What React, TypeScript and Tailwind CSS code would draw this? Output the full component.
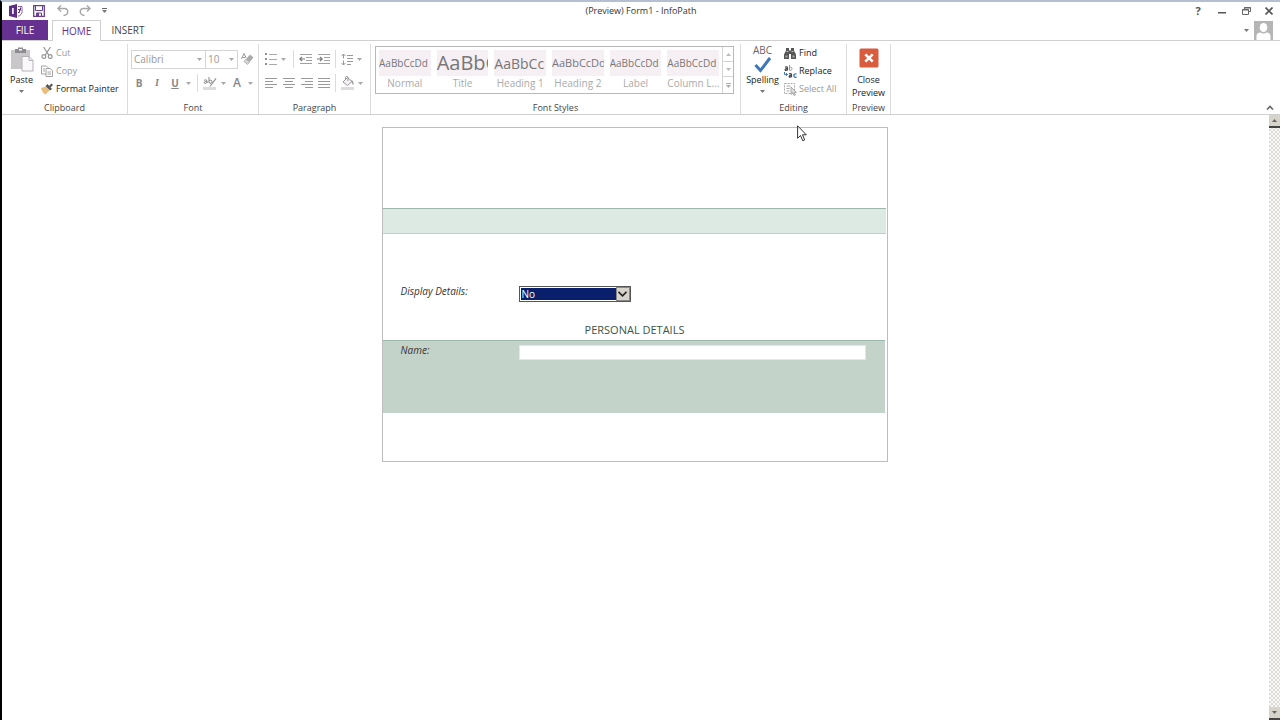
import React from "react";

type IconProps = { className?: string };

function Caret({ className = "text-[#777]" }: IconProps) {
  return (
    <svg className={`shrink-0 ${className}`} width="5" height="3" viewBox="0 0 5 3" fill="currentColor" aria-hidden="true">
      <path d="M0 0h5L2.5 3z" />
    </svg>
  );
}

function InfoPathIcon() {
  return (
    <svg width="14" height="14" viewBox="0 0 14 14" aria-hidden="true">
      <path d="M0 2l8-2v14l-8-2z" fill="#5f2d86" />
      <path d="M3.9 4v6" stroke="#fff" strokeWidth="1.6" />
      <path d="M9 2.5h4v6.5l-2.500 3H9" fill="none" stroke="#8a68a8" strokeWidth="1" />
      <path d="M9 5.500h1.500v3H9M11.500 3.500v3" fill="none" stroke="#5f2d86" strokeWidth="1" />
    </svg>
  );
}

function SaveIcon() {
  return (
    <svg width="12" height="12" viewBox="0 0 12 12" fill="none" stroke="#6a3f92" aria-hidden="true">
      <path d="M.7.7h10.600v10.600H.7z" strokeWidth="1.300" />
      <path d="M2.500 1v4.500h7V1" strokeWidth="1" />
      <path d="M3.500 11V8h5v3" strokeWidth="1" />
      <path d="M4 8h2v3H4z" fill="#6a3f92" stroke="none" />
    </svg>
  );
}

function UndoIcon({ className = "" }: IconProps) {
  return (
    <svg className={className} width="12" height="12" viewBox="0 0 12 12" fill="none" stroke="#a6a6a6" strokeWidth="1.400" aria-hidden="true">
      <path d="M4 .500L1 3.500l3 3" />
      <path d="M1 3.500h6.500C12 3.500 12 10 6.500 10.500" />
    </svg>
  );
}

function PasteIcon() {
  return (
    <svg width="24" height="26" viewBox="0 0 24 26" aria-hidden="true">
      <path d="M1 4h19v19H1z" fill="#c9c7ca" />
      <path d="M5 3h3V1.500h5V3h3v4H5z" fill="#8f8d91" />
      <path d="M9 3h3v1.500H9z" fill="#fff" />
      <path d="M12 10.500h7l4 4V25H12z" fill="#fbf8fc" stroke="#b4b0b7" />
      <path d="M19 10.500v4h4" fill="none" stroke="#b4b0b7" />
    </svg>
  );
}

function CutIcon() {
  return (
    <svg width="12" height="12" viewBox="0 0 12 12" fill="none" stroke="#969696" strokeWidth="1.200" aria-hidden="true">
      <path d="M2.500 0l5.500 8.500M9.500 0L4 8.500" />
      <circle cx="2.800" cy="9.500" r="1.900" />
      <circle cx="9.200" cy="9.500" r="1.900" />
    </svg>
  );
}

function CopyIcon() {
  return (
    <svg width="12" height="12" viewBox="0 0 12 12" fill="#fff" stroke="#a3a3a3" aria-hidden="true">
      <path d="M.5 1h5l1.500 1.500V9H.5z" />
      <path d="M2 4h2M2 6h2" />
      <path d="M5 3.500h4l2.500 2V11.500H5z" />
      <path d="M6.500 7h3.500M6.500 9h3.500" />
    </svg>
  );
}

function PainterIcon() {
  return (
    <svg width="12" height="12" viewBox="0 0 12 12" aria-hidden="true">
      <path d="M0 5l5-1.500 3.500 4L4.500 11.500C2 10.500 1 8 0 5z" fill="#e9bd7c" />
      <path d="M4.500 3l2-2L11 6 9 7.500z" fill="#555" />
      <path d="M8 3l2.500-2.500L12 2 9.500 4.500z" fill="#555" />
    </svg>
  );
}

function EraserIcon() {
  return (
    <svg width="13" height="12" viewBox="0 0 13 12" aria-hidden="true">
      <path d="M.5 6L3 .500 5 4.500M1.500 4.500h3" fill="none" stroke="#999" strokeWidth="1" />
      <path d="M3 8.500L9 1.500 12.500 4.500 6.500 11.500z" fill="#aaa" />
      <path d="M3 8.500L5 6l3.500 3-2 2.500z" fill="#d5d5d5" stroke="#aaa" strokeWidth=".6" />
    </svg>
  );
}

function HighlightIcon() {
  return (
    <svg width="14" height="14" viewBox="0 0 14 14" aria-hidden="true">
      <path d="M1 4.500c1-1 3-.8 3 .5V7M4 5.500C1 5.200.500 7.200 2 7.400 3.200 7.500 4 6.500 4 6M6 1v6M6 5c1-1.500 3-1 3 .7S7 8 6 6.500" fill="none" stroke="#888" strokeWidth="1" />
      <path d="M12.500 2L7 9.500l-1 1.500 2-1L13.500 3z" fill="#999" />
      <path d="M0 11h13v3H0z" fill="#dcdcdc" />
    </svg>
  );
}

function BulletsIcon() {
  return (
    <svg width="12" height="12" viewBox="0 0 12 12" fill="#8f8f8f" aria-hidden="true">
      <path d="M0 0h2v2H0zM0 5h2v2H0zM0 10h2v2H0z" />
      <path d="M4 1h8v1H4zM4 6h8v1H4zM4 11h8v1H4z" fill="#aaa" />
    </svg>
  );
}

function IndentIcon({ direction }: { direction: "in" | "out" }) {
  return (
    <svg width="13" height="10" viewBox="0 0 13 10" fill="none" stroke="#a0a0a0" aria-hidden="true">
      <path d="M1 .5h12M7 3.500h6M7 6.500h6M1 9.500h12" />
      <path d={direction === "out" ? "M6 5H.800M3 2.800L.800 5 3 7.200" : "M0 5h5.200M3 2.800L5.200 5 3 7.200"} stroke="#777" strokeWidth="1.200" />
    </svg>
  );
}

function LineSpacingIcon() {
  return (
    <svg width="12" height="13" viewBox="0 0 12 13" fill="none" stroke="#999" aria-hidden="true">
      <path d="M2.500 1v4.500M.5 3l2-2 2 2M2.500 7.500V12M.5 10l2 2 2-2M6 2.500h6M6 5.500h6M6 8.500h6M6 11.500h4" />
    </svg>
  );
}

const alignPaths = {
  left: "M0 .5h12M0 3.500h8M0 6.500h12M0 9.500h8",
  center: "M0 .5h12M2 3.500h8M0 6.500h12M2 9.500h8",
  right: "M0 .5h12M4 3.500h8M0 6.500h12M4 9.500h8",
  justify: "M0 .5h12M0 3.500h12M0 6.500h12M0 9.500h12",
};

function AlignIcon({ kind }: { kind: keyof typeof alignPaths }) {
  return (
    <svg width="12" height="10" viewBox="0 0 12 10" fill="none" stroke="#999" aria-hidden="true">
      <path d={alignPaths[kind]} />
    </svg>
  );
}

function BucketIcon() {
  return (
    <svg width="14" height="14" viewBox="0 0 14 14" aria-hidden="true">
      <path d="M2 6l4.500-4.500L11 5.500 6.500 9.500z" fill="#f4f0f4" stroke="#999" />
      <path d="M4.500 4V1.500c0-1.500 2.500-1.500 2.500 0V5" fill="none" stroke="#999" />
      <path d="M10 4c2 .5 3 2 2.500 5-1-.5-1.500-1.500-1.500-3z" fill="#999" />
      <path d="M0 11h13v3H0z" fill="#dcdcdc" />
    </svg>
  );
}

function CheckIcon() {
  return (
    <svg width="18" height="17" viewBox="0 0 18 17" aria-hidden="true">
      <path d="M1.500 9l5 5.500L16 2" fill="none" stroke="#3f76b8" strokeWidth="3" />
    </svg>
  );
}

function FindIcon() {
  return (
    <svg width="12" height="11" viewBox="0 0 12 11" fill="#555" aria-hidden="true">
      <path d="M2 0h3v2.500h2V0h3v2.500l2 4V11H7V6H5v5H0V6.500l2-4z" />
      <path d="M1.500 7.500h2v2h-2zM8.500 7.500h2v2h-2z" fill="#aaa" />
      <path d="M2.500 3.500h2M7.500 3.500h2" stroke="#ddd" strokeWidth=".8" />
    </svg>
  );
}

function ReplaceIcon() {
  return (
    <svg className="shrink-0" width="13" height="13" viewBox="0 0 13 13" fill="none" aria-hidden="true">
      <path d="M1 2.300c1-.8 2.500-.5 2.500.7v2.500M3.500 3.700C.700 3.400.700 5.500 2 5.500c1 0 1.500-.7 1.500-1.200" stroke="#444" strokeWidth="1.200" />
      <path d="M5.500 0v5.500M5.500 3c.8-1.300 2.500-.9 2.500.7S6.300 6 5.500 4.700" stroke="#999" />
      <path d="M5 9c1-.8 2.500-.5 2.500.7v2.500M7.500 10.400c-2.800-.3-2.800 1.800-1.500 1.800 1 0 1.500-.7 1.500-1.200" stroke="#444" strokeWidth="1.200" />
      <path d="M12.500 9.200c-1.200-.9-2.700 0-2.700 1.400s1.500 2.200 2.700 1.300" stroke="#3f76b8" strokeWidth="1.300" />
      <path d="M.5 7v2.500h3M2 8l1.500 1.500L2 11" stroke="#3f76b8" />
    </svg>
  );
}

function SelectAllIcon() {
  return (
    <svg className="shrink-0" width="13" height="13" viewBox="0 0 13 13" fill="none" stroke="#aaa" aria-hidden="true">
      <path d="M.5.500h10v10H.5z" strokeDasharray="2 1" />
      <path d="M2.500 3h4M2.500 5.500h3M2.500 8h3" />
      <path d="M7 4v7.500l1.800-1.700L10 12.500l1.500-.6-1.200-2.500H12.500z" fill="#ddd" stroke="#999" strokeWidth=".8" />
    </svg>
  );
}

function ClosePreviewIcon() {
  return (
    <svg width="20" height="20" viewBox="0 0 20 20" aria-hidden="true">
      <rect x=".5" y=".5" width="19" height="19" rx="1.500" fill="#d95c3f" />
      <path d="M6.300 6.300l7.400 7.400M13.700 6.300l-7.400 7.400" stroke="#fff" strokeWidth="2.600" />
    </svg>
  );
}

function Group({ title, className = "", bodyClassName = "", children }: { title: string; className?: string; bodyClassName?: string; children: React.ReactNode }) {
  return (
    <section aria-label={title} className={`flex shrink-0 flex-col border-r border-[#dcdcdc] ${className}`}>
      <div className={`h-[58px] ${bodyClassName}`}>{children}</div>
      <h2 className="text-center leading-3 text-[#444]">{title}</h2>
    </section>
  );
}

function Row({ icon, label, disabled = false }: { icon: React.ReactNode; label: string; disabled?: boolean }) {
  return (
    <button type="button" disabled={disabled} className="flex h-[18px] items-center gap-[3px] whitespace-nowrap text-[#222] disabled:text-[#999]">
      <span className="flex w-3 shrink-0 justify-center">{icon}</span>
      {label}
    </button>
  );
}

function Tool({ label, className, children }: { label: string; className: string; children: React.ReactNode }) {
  return (
    <button type="button" disabled aria-label={label} className={`flex h-5 shrink-0 items-center justify-center ${className}`}>
      {children}
    </button>
  );
}

function Rule() {
  return <span className="h-[18px] w-px shrink-0 bg-[#dcdcdc]" />;
}

function ComboBox({ label, value, className }: { label: string; value: string; className: string }) {
  return (
    <div className={`relative h-[19px] ${className}`}>
      <select disabled aria-label={label} className="h-full w-full appearance-none border border-[#d4d4d4] bg-white px-[2px] text-[10px] text-[#999] opacity-100">
        <option>{value}</option>
      </select>
      <Caret className="pointer-events-none absolute top-2 right-1 text-[#aaa]" />
    </div>
  );
}

const fontStyles = [
  { name: "Normal", sample: "AaBbCcDd", size: "text-[10px]" },
  { name: "Title", sample: "AaBbC", size: "text-[20px]" },
  { name: "Heading 1", sample: "AaBbCc", size: "text-[14px]" },
  { name: "Heading 2", sample: "AaBbCcDd", size: "text-[11px]" },
  { name: "Label", sample: "AaBbCcDd", size: "text-[10px]" },
  { name: "Column L...", sample: "AaBbCcDd", size: "text-[10px]" },
];

function TitleBar() {
  return (
    <header className="flex h-[18px] items-center pl-[7px]">
      <div className="flex flex-1 items-center pb-px">
        <InfoPathIcon />
        <button type="button" aria-label="Save" className="ml-[10px]"><SaveIcon /></button>
        <button type="button" disabled aria-label="Undo" className="ml-3"><UndoIcon /></button>
        <button type="button" disabled aria-label="Redo" className="ml-[10px]"><UndoIcon className="-scale-x-100" /></button>
        <button type="button" aria-label="Customize toolbar" className="ml-[11px] flex flex-col items-center gap-px">
          <span className="h-px w-[5px] bg-[#666]" />
          <Caret />
        </button>
      </div>
      <h1 className="text-[#333]">(Preview) Form1 - InfoPath</h1>
      <div className="flex flex-1 items-center justify-end pl-[7px] text-[#555]">
        <button type="button" aria-label="Help" className="w-6 text-[11px] font-bold">?</button>
        <button type="button" aria-label="Minimize" className="flex w-6 justify-center">
          <svg width="8" height="8" viewBox="0 0 8 8"><path d="M0 5h8v1.500H0z" fill="#555" /></svg>
        </button>
        <button type="button" aria-label="Restore" className="flex w-6 justify-center">
          <svg width="9" height="8" viewBox="0 0 9 8" fill="none" stroke="#666"><path d="M2.500 2.500v-2h6v4H7M.5 2.500h6v5h-6z" /><path d="M2 1h7M0 3h7" /></svg>
        </button>
        <button type="button" aria-label="Close" className="flex w-[22px] justify-center">
          <svg width="8" height="8" viewBox="0 0 8 8" fill="none" stroke="#555" strokeWidth="1.600"><path d="M.5.500l7 7M7.500.500l-7 7" /></svg>
        </button>
      </div>
    </header>
  );
}

function TabBar() {
  return (
    <nav className="flex h-[21px] items-end border-b border-[#d0d0d0] text-[10px]">
      <button type="button" className="h-5 w-[46px] bg-[#65308f] text-white">FILE</button>
      <button type="button" className="-mb-px ml-1 h-[21px] w-[49px] border border-b-0 border-[#d0d0d0] bg-white text-[#65308f]">HOME</button>
      <button type="button" className="h-5 w-[54px] text-[#444]">INSERT</button>
      <button type="button" aria-label="Account" className="mr-[7px] ml-auto flex items-center gap-[5px]">
        <Caret />
        <svg width="19" height="19" viewBox="0 0 19 19" aria-hidden="true">
          <path d="M0 0h19v19H0z" fill="#b5b5b5" />
          <ellipse cx="9.500" cy="6.500" rx="3.800" ry="4.500" fill="#fff" />
          <path d="M2.500 19v-4c0-2 1.500-3.500 4-3.500 1.500 1.300 4.500 1.300 6 0 2.500 0 4 1.500 4 3.500v4z" fill="#fff" />
        </svg>
      </button>
    </nav>
  );
}

function Ribbon() {
  return (
    <div className="flex border-b border-[#d0d0d0] pt-[3px]">
      <Group title="Clipboard" className="w-[126px]">
        <div className="flex">
          <button type="button" className="flex w-[39px] flex-col items-center pt-[2px] text-[#222]">
            <PasteIcon />
            <span className="mt-[2px] leading-3">Paste</span>
            <Caret className="mt-1 text-[#777]" />
          </button>
          <div>
            <Row icon={<CutIcon />} label="Cut" disabled />
            <Row icon={<CopyIcon />} label="Copy" disabled />
            <Row icon={<PainterIcon />} label="Format Painter" />
          </div>
        </div>
      </Group>

      <Group title="Font" className="w-[131px]" bodyClassName="pl-[3px]">
        <div className="flex items-center pt-[5px]">
          <ComboBox label="Font name" value="Calibri" className="w-[75px]" />
          <ComboBox label="Font size" value="10" className="-ml-px w-[33px]" />
          <Tool label="Clear formatting" className="ml-[2px] w-[14px]"><EraserIcon /></Tool>
        </div>
        <div className="flex items-center pt-1 text-[10px] text-[#888]">
          <Tool label="Bold" className="w-4 font-bold">B</Tool>
          <Tool label="Italic" className="w-5 font-serif font-bold italic">I</Tool>
          <Tool label="Underline" className="w-4 font-bold underline">U</Tool>
          <Tool label="Underline options" className="mr-1 w-[10px]"><Caret className="text-[#aaa]" /></Tool>
          <Rule />
          <Tool label="Highlight" className="ml-[5px] w-[14px]"><HighlightIcon /></Tool>
          <Tool label="Highlight options" className="w-3"><Caret className="text-[#aaa]" /></Tool>
          <Tool label="Font color" className="w-4 text-[12px] font-semibold">A</Tool>
          <Tool label="Font color options" className="w-[10px]"><Caret className="text-[#aaa]" /></Tool>
        </div>
      </Group>

      <Group title="Paragraph" className="w-[112px]" bodyClassName="pl-[6px]">
        <div className="flex items-center pt-[5px]">
          <Tool label="Bullets" className="w-3"><BulletsIcon /></Tool>
          <Tool label="Bullet options" className="mr-1 w-[12px]"><Caret className="text-[#aaa]" /></Tool>
          <Rule />
          <Tool label="Decrease indent" className="ml-[5px] w-[13px]"><IndentIcon direction="out" /></Tool>
          <Tool label="Increase indent" className="mx-[5px] w-[13px]"><IndentIcon direction="in" /></Tool>
          <Rule />
          <Tool label="Line spacing" className="ml-[5px] w-3"><LineSpacingIcon /></Tool>
          <Tool label="Line spacing options" className="w-3"><Caret className="text-[#aaa]" /></Tool>
        </div>
        <div className="flex items-center pt-1">
          <Tool label="Align left" className="mr-[6px] w-3"><AlignIcon kind="left" /></Tool>
          <Tool label="Align center" className="mr-[6px] w-3"><AlignIcon kind="center" /></Tool>
          <Tool label="Align right" className="mr-[5px] w-3"><AlignIcon kind="right" /></Tool>
          <Tool label="Justify" className="mr-[5px] w-3"><AlignIcon kind="justify" /></Tool>
          <Rule />
          <Tool label="Shading" className="ml-[5px] w-[14px]"><BucketIcon /></Tool>
          <Tool label="Shading options" className="w-[10px]"><Caret className="text-[#aaa]" /></Tool>
        </div>
      </Group>

      <Group title="Font Styles" className="w-[370px]">
        <div className="mr-[6px] ml-1 pt-[2px]">
          <div className="flex h-12 border border-[#b8b8b8]">
            {fontStyles.map((s) => (
              <button key={s.name} type="button" disabled className="flex w-0 grow flex-col px-[3px] pt-[3px] text-[#aaa]">
                <span className={`flex h-[26px] w-full items-center overflow-hidden bg-[#f6f0f5] whitespace-nowrap text-[#777] ${s.size}`}>{s.sample}</span>
                <span className="w-full text-center text-[10px] leading-[14px] whitespace-nowrap">{s.name}</span>
              </button>
            ))}
            <div className="flex w-[11px] flex-col divide-y divide-[#d4d4d4] border-l border-[#d4d4d4]">
              <button type="button" disabled aria-label="Previous styles" className="flex grow items-center justify-center"><Caret className="rotate-180 text-[#bbb]" /></button>
              <button type="button" disabled aria-label="Next styles" className="flex grow items-center justify-center"><Caret className="text-[#bbb]" /></button>
              <button type="button" disabled aria-label="More styles" className="flex grow flex-col items-center justify-center gap-px"><span className="h-px w-[5px] bg-[#aaa]" /><Caret className="text-[#aaa]" /></button>
            </div>
          </div>
        </div>
      </Group>

      <Group title="Editing" className="w-[106px]">
        <div className="flex">
          <button type="button" className="flex w-[43px] flex-col items-center text-[#222]">
            <span className="text-[10px] leading-3 text-[#666]">ABC</span>
            <CheckIcon />
            <span className="mt-px leading-3">Spelling</span>
            <Caret className="mt-1 text-[#777]" />
          </button>
          <div>
            <Row icon={<FindIcon />} label="Find" />
            <Row icon={<ReplaceIcon />} label="Replace" />
            <Row icon={<SelectAllIcon />} label="Select All" disabled />
          </div>
        </div>
      </Group>

      <Group title="Preview" className="w-11">
        <button type="button" className="flex w-full flex-col items-center pt-1 text-[#222]">
          <ClosePreviewIcon />
          <span className="mt-[5px] leading-[13px]">Close<br />Preview</span>
        </button>
      </Group>

      <button type="button" aria-label="Collapse ribbon" className="mr-[6px] mb-1 ml-auto self-end">
        <svg width="8" height="5" viewBox="0 0 8 5" fill="none" stroke="#666" strokeWidth="1.600" aria-hidden="true"><path d="M1 4.500l3-3 3 3" /></svg>
      </button>
    </div>
  );
}

function FormPreview() {
  return (
    <form className="w-[506px] border border-[#bdbdbd] bg-white text-[10px] text-[#333]">
      <div className="mt-20 mr-px h-[26px] border-y border-t-[#9fb8ad] border-b-[#bcd2c8] bg-[#dde9e3]" />
      <div className="mt-[52px] flex items-start pl-[18px]">
        <label htmlFor="display-details" className="w-[118px] leading-[10px] italic">Display Details:</label>
        <div className="relative h-4 w-28 border border-[#555] bg-white p-px">
          <select id="display-details" defaultValue="No" className="block h-3 w-[95px] appearance-none bg-[#0a1f6b] px-px leading-3 text-white outline-none">
            <option>No</option>
            <option>Yes</option>
          </select>
          <span className="pointer-events-none absolute inset-y-0 right-0 flex w-[14px] items-center justify-center border border-[#888] bg-[#d6d3cb]">
            <svg width="9" height="6" viewBox="0 0 9 6" fill="none" stroke="#222" strokeWidth="1.600" aria-hidden="true"><path d="M.5.800l4 4 4-4" /></svg>
          </span>
        </div>
      </div>
      <h2 className="mt-5 text-center text-[11px] leading-4 text-[#3c5548]">PERSONAL DETAILS</h2>
      <div className="mt-[2px] mr-[2px] mb-12 flex h-[73px] items-start border-t border-[#9fb8ad] bg-[#c3d3ca] pt-1 pl-[18px]">
        <label htmlFor="name" className="w-[118px] leading-[10px] italic">Name:</label>
        <input id="name" type="text" className="h-[15px] w-[347px] border border-[#e2e8e4] bg-white px-1 outline-none" />
      </div>
    </form>
  );
}

function ScrollBar() {
  return (
    <div className="flex w-[11px] flex-col justify-between bg-[#ebe9e4] bg-[repeating-conic-gradient(#dedcd8_0_25%,#f8f8f6_0_50%)] bg-size-[4px_4px]">
      <button type="button" aria-label="Scroll up" className="flex h-[13px] items-center justify-center border-b-2 border-[#444] bg-[#d6d3cb]"><Caret className="rotate-180 text-[#666]" /></button>
      <button type="button" aria-label="Scroll down" className="flex h-[13px] items-center justify-center border-b-2 border-[#444] bg-[#d6d3cb]"><Caret className="text-[#666]" /></button>
    </div>
  );
}

export default function App() {
  return (
    <div className="relative flex min-h-screen flex-col border-t-2 border-l-2 border-t-[#b4c0d2] border-l-black bg-white font-['Open_Sans','Noto_Sans',sans-serif] text-[9px]">
      <TitleBar />
      <TabBar />
      <Ribbon />
      <main className="flex grow">
        <div className="flex grow items-start justify-center pt-3 pr-[2px]">
          <FormPreview />
        </div>
        <ScrollBar />
      </main>
      <svg className="pointer-events-none absolute top-[123px] left-[795px]" width="10" height="17" viewBox="0 0 10 17" aria-hidden="true">
        <path d="M.6.800v12.500l2.900-2.800 2.200 5.200 2-.8-2.200-5.100h3.800z" fill="#fff" stroke="#333" strokeWidth="1" />
      </svg>
    </div>
  );
}
